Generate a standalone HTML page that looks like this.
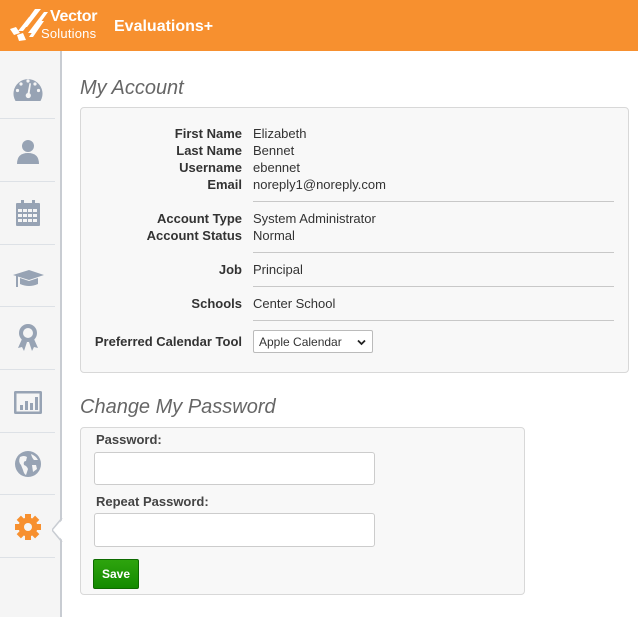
<!DOCTYPE html>
<html><head><style>
*{box-sizing:border-box;margin:0;padding:0}
body{width:638px;height:617px;overflow:hidden;background:#fff;font-family:"Liberation Sans",Arial,sans-serif;font-size:13px;color:#333;position:relative}
.hdr{position:absolute;left:0;top:0;width:638px;height:51px;background:#f7902f}
.side{position:absolute;left:0;top:51px;width:62px;height:566px;background:#f5f5f5;border-right:2px solid #c8ccd2}
.div{position:absolute;left:0;width:55px;height:1px;background:#dde1e6}
.ic{position:absolute;left:12px;width:32px;height:32px}
.abs{position:absolute}
.lbl{position:absolute;right:396px;font-weight:bold;white-space:nowrap}
.val{position:absolute;left:253px;white-space:nowrap}
.sep{position:absolute;left:253px;width:361px;height:1px;background:#c8c8c8}
h2{position:absolute;left:80px;font-style:italic;font-weight:normal;font-size:20px;color:#666}
</style></head><body>
<div class="hdr">
<svg class="abs" style="left:7px;top:7px" width="42" height="36" viewBox="0 0 42 36" fill="#fff">
<polygon points="28,2 34,2 20,20 15,20"/><polygon points="37,5 41,5 26,26 21,26"/><polygon points="22,10 27,10 16,24 11,24"/><polygon points="3,22 9,20 13,26 7,28"/><polygon points="10,28 16,26 19,33 12,34"/><polygon points="33,14 37,14 26,30 22,30"/>
</svg>
<div class="abs" style="left:50px;top:8px;color:#fff;font-weight:bold;font-size:16px;letter-spacing:-0.3px">Vector</div>
<div class="abs" style="left:41px;top:26px;color:#fff;font-size:13px;font-weight:300;letter-spacing:0.2px">Solutions</div>
<div class="abs" style="left:114px;top:18px;color:#fff;font-weight:bold;font-size:16px">Evaluations+</div>
</div>
<div class="side">
<div class="div" style="top:67px"></div><div class="div" style="top:130px"></div><div class="div" style="top:193px"></div><div class="div" style="top:255px"></div><div class="div" style="top:318px"></div><div class="div" style="top:381px"></div><div class="div" style="top:443px"></div><div class="div" style="top:506px"></div>
<!-- gauge -->
<svg class="ic" style="top:22px" viewBox="0 0 32 32" fill="#97a3b4"><path d="M3.5 28 A14.5 14.5 0 1 1 28.5 28 Z"/><g fill="#f5f5f5"><circle cx="16" cy="8" r="1.6"/><circle cx="9" cy="11" r="1.6"/><circle cx="23" cy="11" r="1.6"/><circle cx="5.5" cy="17.5" r="1.6"/><circle cx="26.5" cy="17.5" r="1.6"/><polygon points="17.5,10 19,10.5 17.5,21 15.5,20.5"/><circle cx="16.3" cy="22.5" r="2.6"/></g></svg>
<!-- user -->
<svg class="ic" style="top:85px" viewBox="0 0 32 32" fill="#97a3b4"><circle cx="16" cy="10" r="6"/><path d="M5 28 Q5 17 16 17 Q27 17 27 28 Z"/></svg>
<!-- calendar -->
<svg class="ic" style="top:146px" viewBox="0 0 32 32" fill="#97a3b4"><rect x="4" y="6" width="24" height="23" rx="1"/><rect x="9" y="3" width="3" height="6"/><rect x="20" y="3" width="3" height="6"/><g fill="#f5f5f5"><rect x="6" y="12" width="4" height="3"/><rect x="11" y="12" width="4" height="3"/><rect x="16" y="12" width="4" height="3"/><rect x="21" y="12" width="4" height="3"/><rect x="6" y="17" width="4" height="3"/><rect x="11" y="17" width="4" height="3"/><rect x="16" y="17" width="4" height="3"/><rect x="21" y="17" width="4" height="3"/><rect x="6" y="22" width="4" height="3"/><rect x="11" y="22" width="4" height="3"/><rect x="16" y="22" width="4" height="3"/><rect x="21" y="22" width="4" height="3"/></g></svg>
<!-- grad cap -->
<svg class="ic" style="top:212px" viewBox="0 0 32 32" fill="#97a3b4"><polygon points="1,12 17,7 32,12 17,17"/><path d="M8 15 L8 21 Q17 25 26 21 L26 15 L17 18 Z"/><rect x="4" y="13" width="2" height="11"/></svg>
<!-- award -->
<svg class="ic" style="top:270px" viewBox="0 0 32 32" fill="#97a3b4"><circle cx="16" cy="12" r="9"/><circle cx="16" cy="12" r="5" fill="#f5f5f5"/><polygon points="10,18 6,27 10,26 12,30 15,21"/><polygon points="22,18 26,27 22,26 20,30 17,21"/></svg>
<!-- chart -->
<svg class="ic" style="top:335px" viewBox="0 0 32 32" fill="#97a3b4"><rect x="2" y="5" width="28" height="23" rx="1.5"/><rect x="4.5" y="7.5" width="23" height="18" fill="#f5f5f5"/><rect x="8" y="19" width="3" height="5"/><rect x="13" y="15" width="3" height="9"/><rect x="18" y="17" width="3" height="7"/><rect x="23" y="11" width="3" height="13"/></svg>
<!-- globe -->
<svg class="ic" style="top:397px" viewBox="0 0 32 32" fill="#97a3b4"><circle cx="16" cy="16" r="13"/><path fill="#f5f5f5" d="M8 9 Q12 7 15 9 L14 13 Q11 13 12 17 Q15 18 16 21 L14 27 Q12 26 11 22 L9 17 Q6 14 8 9 Z M19 6 Q24 8 26 12 L22 12 Q20 10 19 6 Z M20 17 L24 17 L25 21 L21 24 Z"/></svg>
<!-- gear -->
<svg class="ic" style="top:460px" viewBox="0 0 32 32" fill="#f7902f"><g transform="translate(16 16)"><rect x="-3" y="-13" width="6" height="26"/><rect x="-3" y="-13" width="6" height="26" transform="rotate(45)"/><rect x="-3" y="-13" width="6" height="26" transform="rotate(90)"/><rect x="-3" y="-13" width="6" height="26" transform="rotate(135)"/><circle r="9.5"/><circle r="4" fill="#f5f5f5"/></g></svg>
</div>
<svg class="abs" style="left:52px;top:518px" width="12" height="24" viewBox="0 0 12 24"><polygon points="12,0 1,12 12,24" fill="#fff"/><polyline points="10,0 0,12 10,24" fill="none" stroke="#c8ccd2" stroke-width="1.5"/></svg>
<h2 style="top:77px">My Account</h2>
<div class="abs" style="left:80px;top:107px;width:549px;height:266px;background:#f8f8f8;border:1px solid #d8d8d8;border-radius:4px"></div>
<div class="lbl" style="top:126px">First Name</div><div class="val" style="top:126px">Elizabeth</div>
<div class="lbl" style="top:143px">Last Name</div><div class="val" style="top:143px">Bennet</div>
<div class="lbl" style="top:160px">Username</div><div class="val" style="top:160px">ebennet</div>
<div class="lbl" style="top:177px">Email</div><div class="val" style="top:177px">noreply1@noreply.com</div>
<div class="sep" style="top:201px"></div>
<div class="lbl" style="top:211px">Account Type</div><div class="val" style="top:211px">System Administrator</div>
<div class="lbl" style="top:228px">Account Status</div><div class="val" style="top:228px">Normal</div>
<div class="sep" style="top:252px"></div>
<div class="lbl" style="top:262px">Job</div><div class="val" style="top:262px">Principal</div>
<div class="sep" style="top:286px"></div>
<div class="lbl" style="top:296px">Schools</div><div class="val" style="top:296px">Center School</div>
<div class="sep" style="top:320px"></div>
<div class="lbl" style="top:334px">Preferred Calendar Tool</div>
<div class="abs" style="left:253px;top:330px;width:120px;height:23px;background:#fff;border:1px solid #bbb;border-radius:2px;font-size:12px;padding:4px 0 0 5px">Apple Calendar
<svg class="abs" style="left:103px;top:8px" width="9" height="7" viewBox="0 0 9 7"><polyline points="1,1.5 4.5,5 8,1.5" fill="none" stroke="#222" stroke-width="1.8"/></svg></div>
<h2 style="top:396px">Change My Password</h2>
<div class="abs" style="left:80px;top:427px;width:445px;height:168px;background:#f8f8f8;border:1px solid #d8d8d8;border-radius:4px"></div>
<div class="abs" style="left:96px;top:432px;font-weight:bold;color:#444">Password:</div>
<div class="abs" style="left:94px;top:452px;width:281px;height:33px;background:#fff;border:1px solid #ccc;border-radius:3px"></div>
<div class="abs" style="left:96px;top:494px;font-weight:bold;color:#444">Repeat Password:</div>
<div class="abs" style="left:94px;top:513px;width:281px;height:34px;background:#fff;border:1px solid #ccc;border-radius:3px"></div>
<div class="abs" style="left:93px;top:559px;width:46px;height:30px;background:linear-gradient(#2ea40e,#138a00);border:1px solid #0d6a00;border-radius:2px;color:#fff;font-weight:bold;font-size:12px;text-align:center;line-height:28px">Save</div>
</body></html>
